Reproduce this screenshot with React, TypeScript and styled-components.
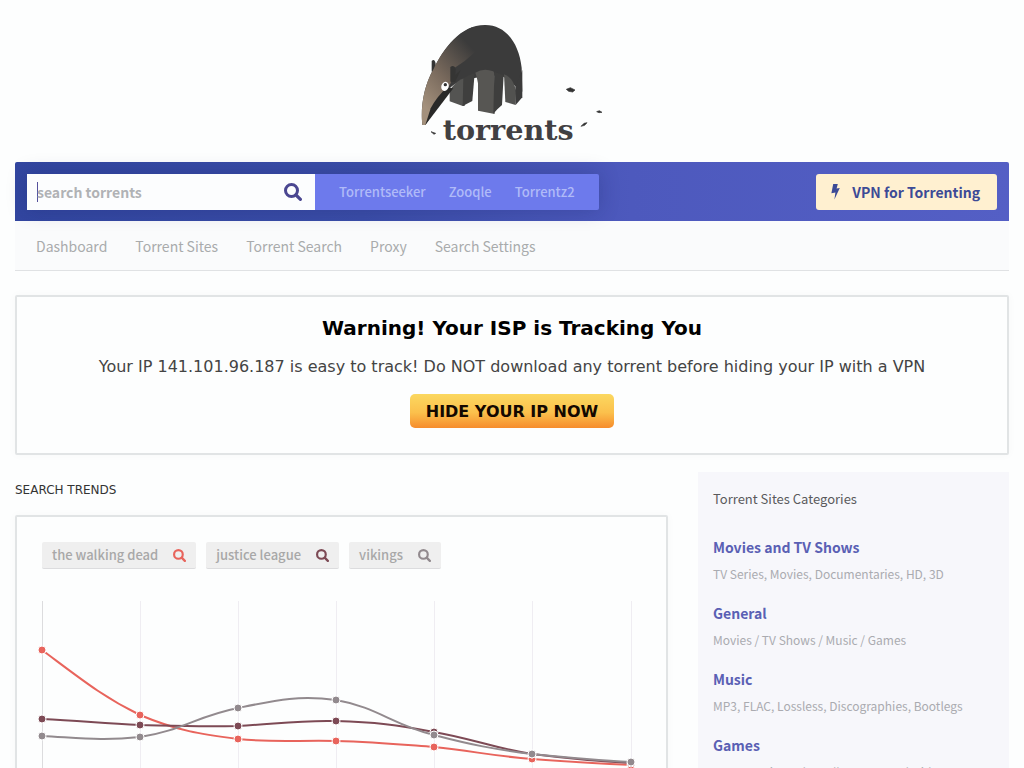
import React from 'react';
import styled, { createGlobalStyle } from 'styled-components';

const GlobalStyle = createGlobalStyle`
  * { box-sizing: border-box; }
  body {
    margin: 0;
    background: #fdfefe;
    color: #444;
    font-family: 'Noto Sans CJK SC', 'Noto Sans', sans-serif;
  }
  h1, h2, h3, p, ul { margin: 0; padding: 0; }
  ul { list-style: none; }
  a { text-decoration: none; color: inherit; }
`;

const dejavu = `'DejaVu Sans', sans-serif`;

const Page = styled.div`
  padding: 0 15px 40px;
`;

const LogoLink = styled.a`
  display: flex;
  justify-content: center;
  height: 162px;
  padding-top: 15px;
`;

const TopBar = styled.header`
  display: flex;
  align-items: center;
  height: 59px;
  padding: 0 12px;
  border-radius: 2px 2px 0 0;
  background: linear-gradient(90deg, #3246a0 0%, #3b4da8 35%, #4d59bd 62%, #545fc5 100%);
`;

const SearchGroup = styled.div`
  display: flex;
  height: 36px;
  border-radius: 2px;
  box-shadow: 0 0 20px rgba(20, 30, 90, 0.25);
`;

const SearchForm = styled.form`
  display: flex;
  width: 288px;
  padding-left: 10px;
  background: #fcfdfe;
`;

const SearchInput = styled.input`
  flex: 1;
  min-width: 0;
  border: 0;
  padding: 0;
  background: linear-gradient(#55509c, #55509c) no-repeat left center / 1px 20px;
  outline: none;
  color: #444;
  caret-color: #55509c;
  font: 700 14px 'Noto Sans CJK SC', sans-serif;
  &::placeholder { color: #b0b2b5; opacity: 1; }
`;

const IconButton = styled.button`
  display: flex;
  align-items: center;
  justify-content: center;
  width: 44px;
  padding: 0;
  border: 0;
  background: none;
  color: #4b4791;
`;

const QuickLinks = styled.nav`
  display: flex;
  align-items: center;
  gap: 23px;
  padding: 0 24px;
  border-radius: 0 2px 2px 0;
  background: #6d7aec;
  color: #b0baf8;
  font-size: 13px;
  font-weight: 500;
  line-height: 20px;
`;

const VpnLink = styled.a`
  display: flex;
  align-items: center;
  gap: 12px;
  height: 36px;
  margin-left: auto;
  padding: 0 17px 0 15px;
  border-radius: 3px;
  background: #fff0d0;
  color: #3c4a96;
  font-size: 14px;
  font-weight: 700;
`;

const MainNav = styled.nav`
  display: flex;
  align-items: center;
  gap: 28px;
  height: 50px;
  padding: 0 21px;
  border-bottom: 1px solid #e0e2e4;
  background: #fafbfc;
  color: #a9abac;
  font-size: 14px;
`;

const Panel = styled.section`
  border: 2px solid #e1e4e5;
  border-radius: 2px;
  background: #fdfefe;
  box-shadow: 0 0 8px rgba(0, 0, 0, 0.03);
`;

const Warning = styled(Panel)`
  display: flex;
  flex-direction: column;
  align-items: center;
  margin-top: 24px;
  padding: 19px 16px 25px;
  font-family: ${dejavu};
  text-align: center;
`;

const WarningTitle = styled.h1`
  color: #000;
  font-size: 20px;
  line-height: 24px;
`;

const WarningText = styled.p`
  margin-top: 15px;
  font-size: 16px;
  line-height: 24px;
`;

const HideButton = styled.button`
  height: 34px;
  margin-top: 15px;
  padding: 0 16px;
  border: 0;
  border-radius: 5px;
  background: linear-gradient(#fbd860, #fbc04c 55%, #f68c2c);
  color: #140800;
  font: 700 16px ${dejavu};
`;

const Columns = styled.div`
  display: flex;
  align-items: flex-start;
  gap: 30px;
  margin-top: 17px;
`;

const Main = styled.main`
  flex: 1;
  min-width: 0;
`;

const SectionTitle = styled.h2`
  padding: 9px 0 16px;
  color: #333;
  font: 400 12px/18px ${dejavu};
`;

const TrendsPanel = styled(Panel)`
  padding: 25px 25px 40px;
`;

const Tags = styled.div`
  display: flex;
  gap: 10px;
`;

const Tag = styled.a<{ $icon: string }>`
  display: flex;
  align-items: center;
  gap: 15px;
  height: 27px;
  padding: 0 10px;
  border-bottom: 1px solid #dcdcde;
  border-radius: 2px;
  background: #efefef;
  color: #a8a8a8;
  font-size: 13px;
  font-weight: 500;
  line-height: 20px;
  svg { color: ${(p) => p.$icon}; }
`;

const Chart = styled.svg`
  display: block;
  width: 100%;
  margin-top: 31px;
  overflow: visible;
`;

const Sidebar = styled.aside`
  width: 311px;
  padding: 17px 15px 40px;
  background: #f7f7fb;
`;

const SidebarTitle = styled.h2`
  margin-bottom: 27px;
  color: #5a5a5c;
  font-size: 13px;
  font-weight: 400;
  line-height: 20px;
`;

const Category = styled.li`
  padding-bottom: 18px;
`;

const CategoryName = styled.a`
  display: block;
  color: #5a60b4;
  font-size: 14px;
  font-weight: 700;
  line-height: 22px;
`;

const CategoryText = styled.p`
  margin-top: 6px;
  color: #aaabb0;
  font-size: 12px;
  line-height: 20px;
`;

const SearchIcon = ({ size }: { size: number }) => (
  <svg width={size} height={size} viewBox="0 0 18 18" fill="none" stroke="currentColor" aria-hidden="true">
    <circle cx="7.5" cy="7.5" r="6" strokeWidth="3" />
    <path d="M12 12l4.4 4.4" strokeWidth="3.2" strokeLinecap="round" />
  </svg>
);

const BoltIcon = () => (
  <svg width="9" height="17" viewBox="0 0 9 17" fill="currentColor" aria-hidden="true">
    <path d="M2.2 1h4.6L5.6 5.6l3.2-.6L3.4 16.4l1-6.8L.4 10.2z" />
  </svg>
);

const Logo = () => (
  <svg width="200" height="135" viewBox="6 0 600 405" role="img" aria-label="torrents">
    <defs>
      <linearGradient id="hide" gradientUnits="userSpaceOnUse" x1="40" y1="270" x2="205" y2="120">
        <stop offset="0" stopColor="#a3907c" />
        <stop offset="0.45" stopColor="#78695c" />
        <stop offset="1" stopColor="#3b3b3b" />
      </linearGradient>
    </defs>
    <path d="M65 170V138q9-8 12 8v20z" fill="#343433" />
    <path d="M37 330C31 275 42 210 72 160C100 102 150 30 225 30C285 29 327 82 335 158L337 230L282 186L240 180L190 190C150 196 128 207 111 230L46 330z" fill="#3b3b3b" />
    <path d="M119 226Q140 195 164 189V273L158 273L119 259z" fill="#545452" />
    <path d="M160 190Q178 178 194 174L187 258L158 273z" fill="#3f3f3e" />
    <path d="M196 173Q220 158 250 169Q254 175 254 180V297L204 287V205Q202 190 196 173z" fill="#575653" />
    <path d="M253 170L281 180L276 270L262 283L250 296z" fill="#3e3e3d" />
    <path d="M282 178Q308 186 318 226L317 270L286 261z" fill="#525250" />
    <path d="M316 215L337 165V247L317 270z" fill="#3b3b3b" />
    <path d="M37 330C31 275 42 210 72 160C91 118 132 60 187 37L196 110Q165 140 132 160L122 205L46 330z" fill="url(#hide)" />
    <path d="M46 330l16-50q18-35 48-62l20 2z" fill="#292928" />
    <path d="M121 200V156q12-8 16 6l-1 18 16-14-17 35z" fill="#353534" />
    <ellipse cx="105" cy="214" rx="11" ry="14" fill="#fff" transform="rotate(18 105 214)" />
    <circle cx="106" cy="209" r="5" fill="#333" />
    <path d="M469 223l12-5 14 7-7 6-12-2zM560 290l8-3 8 5-9 1zM513 334l9-9 9-2-7 8zM63 350l14 5-5 3z" fill="#333" stroke="#333" strokeWidth="2" />
    <text x="98" y="376" fontFamily="'DejaVu Serif', serif" fontWeight="700" fontSize="86" fill="#414042">
      torrents
    </text>
  </svg>
);

const QUICK = ['Torrentseeker', 'Zooqle', 'Torrentz2'];
const NAV = ['Dashboard', 'Torrent Sites', 'Torrent Search', 'Proxy', 'Search Settings'];
const TAGS = [
  { name: 'the walking dead', color: '#e8645c' },
  { name: 'justice league', color: '#7d4a55' },
  { name: 'vikings', color: '#928a8e' },
];
const CATEGORIES = [
  { name: 'Movies and TV Shows', text: 'TV Series, Movies, Documentaries, HD, 3D' },
  { name: 'General', text: 'Movies / TV Shows / Music / Games' },
  { name: 'Music', text: 'MP3, FLAC, Lossless, Discographies, Bootlegs' },
  { name: 'Games', text: 'PC, PSP, Nintendo, Full Games, Android' },
];

const XS = [0, 98, 196, 294, 392, 490, 589];
const SERIES = [
  {
    color: '#e8645c',
    ys: [50, 115, 139, 141, 147, 159, 165],
    path: 'M0 50C39 79 61 97 98 115C136 131 158 134 196 139C235 143 255 140 294 141C333 142 353 144 392 147C431 151 451 156 490 159C530 162 550 163 589 165',
  },
  {
    color: '#7d4a55',
    ys: [119, 125, 126, 121, 132, 154, 163],
    path: 'M0 119C39 121 59 123 98 125C137 126 157 127 196 126C235 124 255 120 294 121C333 122 355 125 392 132C432 139 451 148 490 154C530 159 550 161 589 163',
  },
  {
    color: '#928a8e',
    ys: [136, 137, 108, 100, 135, 154, 162],
    path: 'M0 136C39 138 60 141 98 137C139 131 155 116 196 108C235 100 257 95 294 100C335 107 351 125 392 135C430 145 451 149 490 154C530 158 550 160 589 162',
  },
];

export default function App() {
  return (
    <>
      <GlobalStyle />
      <Page>
        <LogoLink href="#">
          <Logo />
        </LogoLink>
        <TopBar>
          <SearchGroup>
            <SearchForm>
              <SearchInput type="text" aria-label="search torrents" placeholder="search torrents" />
              <IconButton type="button" aria-label="Search">
                <SearchIcon size={18} />
              </IconButton>
            </SearchForm>
            <QuickLinks>
              {QUICK.map((q) => (
                <a key={q} href="#">{q}</a>
              ))}
            </QuickLinks>
          </SearchGroup>
          <VpnLink href="#">
            <BoltIcon />
            VPN for Torrenting
          </VpnLink>
        </TopBar>
        <MainNav>
          {NAV.map((n) => (
            <a key={n} href="#">{n}</a>
          ))}
        </MainNav>
        <Warning>
          <WarningTitle>Warning! Your ISP is Tracking You</WarningTitle>
          <WarningText>
            Your IP 141.101.96.187 is easy to track! Do NOT download any torrent before hiding your IP with a VPN
          </WarningText>
          <HideButton type="button">HIDE YOUR IP NOW</HideButton>
        </Warning>
        <Columns>
          <Main>
            <SectionTitle>SEARCH TRENDS</SectionTitle>
            <TrendsPanel>
              <Tags>
                {TAGS.map((t) => (
                  <Tag key={t.name} href="#" $icon={t.color}>
                    {t.name}
                    <SearchIcon size={13} />
                  </Tag>
                ))}
              </Tags>
              <Chart viewBox="0 0 599 200" role="img" aria-label="Search trends">
                {XS.map((x, i) => (
                  <path key={x} d={`M${x + 0.5} 1V200`} stroke={i ? '#efedf2' : '#dcdcde'} />
                ))}
                {SERIES.map((s) => (
                  <g key={s.color}>
                    <path d={s.path} fill="none" stroke={s.color} strokeWidth="2" />
                    {s.ys.map((y, i) => (
                      <circle key={i} cx={XS[i]} cy={y} r="4" fill={s.color} stroke="#fff" />
                    ))}
                  </g>
                ))}
              </Chart>
            </TrendsPanel>
          </Main>
          <Sidebar>
            <SidebarTitle>Torrent Sites Categories</SidebarTitle>
            <ul>
              {CATEGORIES.map((c) => (
                <Category key={c.name}>
                  <CategoryName href="#">{c.name}</CategoryName>
                  <CategoryText>{c.text}</CategoryText>
                </Category>
              ))}
            </ul>
          </Sidebar>
        </Columns>
      </Page>
    </>
  );
}
